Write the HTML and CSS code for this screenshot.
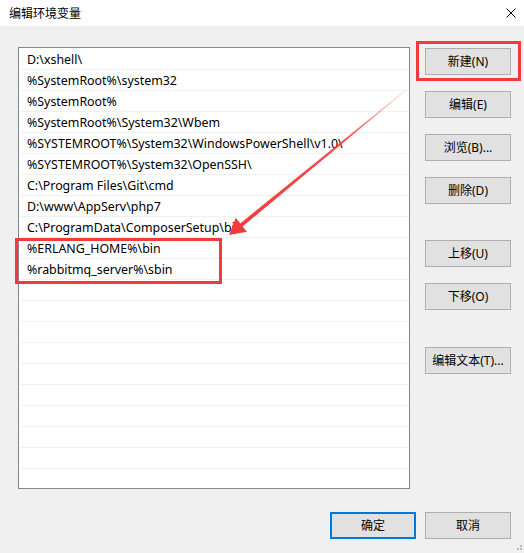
FILE: index.html
```html
<!DOCTYPE html>
<html lang="zh-CN">
<head>
<meta charset="utf-8">
<title>编辑环境变量</title>
<link rel="stylesheet" href="styles.css">
</head>
<body>
<div class="window">
  <div class="titlebar">
    <span class="title">编辑环境变量</span>
    <svg class="close" width="10" height="10" viewBox="0 0 10 10"><path d="M0.5 0.5 L9.5 9.5 M9.5 0.5 L0.5 9.5" stroke="#000" stroke-width="1" fill="none"/></svg>
  </div>
  <div class="body">
    <div class="main">
      <div class="list">
        <div class="row">D:\xshell\</div>
        <div class="row">%SystemRoot%\system32</div>
        <div class="row">%SystemRoot%</div>
        <div class="row">%SystemRoot%\System32\Wbem</div>
        <div class="row">%SYSTEMROOT%\System32\WindowsPowerShell\v1.0\</div>
        <div class="row">%SYSTEMROOT%\System32\OpenSSH\</div>
        <div class="row">C:\Program Files\Git\cmd</div>
        <div class="row">D:\www\AppServ\php7</div>
        <div class="row">C:\ProgramData\ComposerSetup\bin</div>
        <div class="row">%ERLANG_HOME%\bin</div>
        <div class="row">%rabbitmq_server%\sbin</div>
        <div class="row"></div>
        <div class="row"></div>
        <div class="row"></div>
        <div class="row"></div>
        <div class="row"></div>
        <div class="row"></div>
        <div class="row"></div>
        <div class="row"></div>
        <div class="row"></div>
        <div class="row"></div>
      </div>
      <div class="actions">
        <button class="btn">新建(N)</button>
        <button class="btn">编辑(E)</button>
        <button class="btn">浏览(B)...</button>
        <button class="btn">删除(D)</button>
        <button class="btn btn-up">上移(U)</button>
        <button class="btn">下移(O)</button>
        <button class="btn btn-text">编辑文本(T)...</button>
      </div>
    </div>
    <div class="footer">
      <button class="btn btn-default">确定</button>
      <button class="btn">取消</button>
    </div>
  </div>
  <svg class="annot" width="524" height="553" viewBox="0 0 524 553">
    <defs>
      <linearGradient id="ag" gradientUnits="userSpaceOnUse" x1="406" y1="90" x2="229" y2="235">
        <stop offset="0" stop-color="#f23a3a" stop-opacity="0.15"/>
        <stop offset="0.35" stop-color="#f23a3a" stop-opacity="0.9"/>
        <stop offset="1" stop-color="#f23a3a"/>
      </linearGradient>
    </defs>
    <rect x="417.5" y="42.5" width="102" height="37" fill="none" stroke="#f23a3a" stroke-width="3"/>
    <rect x="16.5" y="239.5" width="204" height="43" fill="none" stroke="#f23a3a" stroke-width="3"/>
    <polygon fill="url(#ag)" points="406.3,90.3 242.6,226.4 247.0,231.8 229,235 235.7,217.8 240.2,223.4 405.7,89.7"/>
  </svg>
  <svg class="grip" width="8" height="8" viewBox="0 0 8 8">
    <rect x="5" y="1" width="2" height="2" fill="#bcbcbc"/>
    <rect x="2" y="4" width="2" height="2" fill="#bcbcbc"/>
    <rect x="5" y="4" width="2" height="2" fill="#bcbcbc"/>
  </svg>
</div>
</body>
</html>
```

FILE: styles.css
```css
html, body {
  margin: 0;
  padding: 0;
  background: #f0f0f0;
}

body {
  font-family: "Noto Sans", "Noto Sans CJK SC", sans-serif;
  color: #000;
}

.window {
  position: relative;
  width: 524px;
  height: 553px;
  background: #f0f0f0;
  overflow: hidden;
}

.titlebar {
  height: 26px;
  background: #fff;
  display: flex;
  align-items: center;
  justify-content: space-between;
  padding: 0 8px 0 9px;
  box-sizing: border-box;
}

.title {
  font-size: 12px;
  line-height: 20px;
  font-family: "Noto Sans CJK SC", sans-serif;
}

.close {
  display: block;
}

.body {
  padding: 21px 13px 0 18px;
}

.main {
  display: flex;
  align-items: flex-start;
  gap: 15px;
}

.list {
  width: 392px;
  height: 442px;
  box-sizing: border-box;
  border: 1px solid #828790;
  background: #fff;
  padding-top: 1px;
  overflow: hidden;
}

.row {
  height: 21px;
  box-sizing: border-box;
  border-bottom: 1px solid #f0f0f0;
  margin: 0 0 0 1px;
  padding-left: 7px;
  font-size: 12.4px;
  line-height: 22px;
  white-space: nowrap;
  overflow: hidden;
}

.actions {
  width: 86px;
  padding-top: 1px;
  display: flex;
  flex-direction: column;
  gap: 16px;
}

.btn {
  width: 86px;
  height: 27px;
  box-sizing: border-box;
  margin: 0;
  padding: 0;
  background: #e1e1e1;
  border: 1px solid #adadad;
  font-family: "Noto Sans", "Noto Sans CJK SC", sans-serif;
  font-size: 12px;
  color: #000;
  line-height: 1;
}

.btn-up {
  margin-top: 20px;
}

.btn-text {
  margin-top: 21px;
}

.btn-default {
  border: 2px solid #0078d7;
}

.footer {
  margin-top: 23px;
  display: flex;
  justify-content: flex-end;
  gap: 9px;
}

.annot {
  position: absolute;
  left: 0;
  top: 0;
  pointer-events: none;
}

.grip {
  position: absolute;
  right: 1px;
  bottom: 1px;
}
```
